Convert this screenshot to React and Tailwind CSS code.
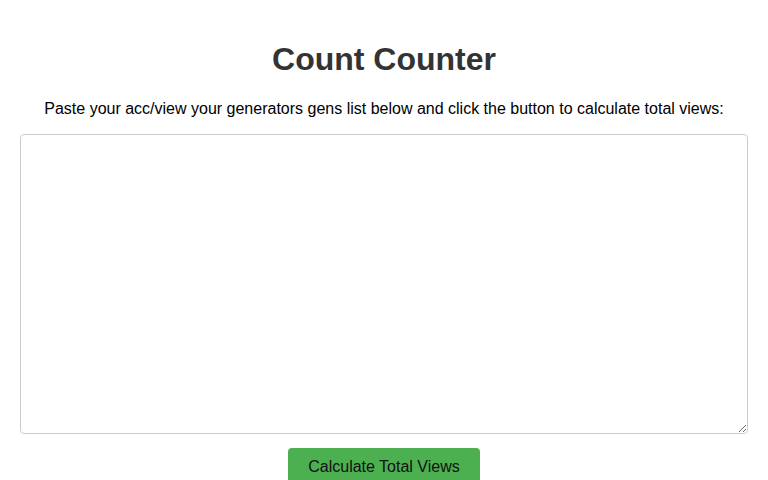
import React, { useState } from 'react';

const App = () => {
  const [list, setList] = useState('');

  return (
    <div className="min-h-screen bg-white p-5 text-center font-['Liberation_Sans',Arial,sans-serif] text-black">
      <h1 className="mt-[21px] mb-[22px] text-[32px] leading-[37px] font-bold text-[#333]">Count Counter</h1>
      <p className="mb-4 text-base leading-[18px]">
        Paste your acc/view your generators gens list below and click the button to calculate total views:
      </p>
      <textarea
        value={list}
        onChange={(e) => setList(e.target.value)}
        className="block h-[300px] w-full rounded border border-[#ccc] p-2 text-sm"
      />
      <button className="mt-[14px] rounded bg-[#4caf50] px-5 py-[10px] text-base leading-[18px] text-[#111]">
        Calculate Total Views
      </button>
    </div>
  );
};

export default App;
